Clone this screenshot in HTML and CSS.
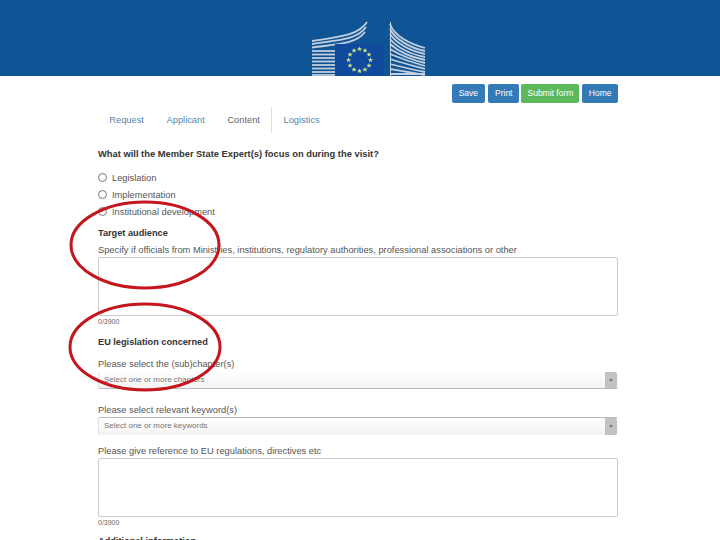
FILE: index.html
```html
<!DOCTYPE html>
<html lang="en">
<head>
    <meta charset="UTF-8">
    <title>Content</title>
    <link rel="stylesheet" href="styles.css">
</head>
<body>

<header class="banner">
    <svg class="logo" width="116" height="58" viewBox="0 0 116 58">
        <g class="wing" fill="none" stroke="#c3cfde" stroke-width="1.800">
            <path d="M2 23 C28 19 48 18 57 4"/>
            <path d="M2 26 C28 22 47 22 56 9"/>
            <path d="M2 29.500 C28 26 46 26 55 14"/>
            <path d="M2 33 H25"/>
            <path d="M2 36.500 H25"/>
            <path d="M2 40 H25"/>
            <path d="M2 43.500 H25"/>
            <path d="M2 47 H25"/>
            <path d="M2 50.500 H25"/>
            <path d="M2 54 H25"/>
            <path d="M2 57 H25"/>
            <path d="M80 6 C84 18 100 26 115 30"/>
            <path d="M80 11 C85 21 100 30 115 33"/>
            <path d="M80 16 C86 25 100 33 115 36"/>
            <path d="M80 21 C87 29 100 36 115 39"/>
            <path d="M80 26 C88 33 100 39 115 42"/>
            <path d="M80 31 C90 37 102 42 115 45"/>
            <path d="M80 36 C92 41 104 45 115 48"/>
            <path d="M80 41 C92 45 104 48 115 51"/>
            <path d="M80 46 C92 49 104 52 115 54"/>
            <path d="M80 51 C92 53 104 55 115 57"/>
            <path d="M80 56 H115"/>
            <path d="M80.500 4 V58" stroke-width="1"/>
        </g>
        <rect x="25" y="26" width="49" height="32" fill="#0f4a9c"/>
        <defs>
            <polygon id="star" points="0,-2.600 .7,-.8 2.500,-.8 1.100,.4 1.600,2.200 0,1.100 -1.600,2.200 -1.100,.4 -2.500,-.8 -.7,-.8" fill="#cfe58a"/>
        </defs>
        <use href="#star" x="49.500" y="31"/>
        <use href="#star" x="55" y="32.500"/>
        <use href="#star" x="59" y="36.500"/>
        <use href="#star" x="60.500" y="42"/>
        <use href="#star" x="59" y="47.500"/>
        <use href="#star" x="55" y="51.500"/>
        <use href="#star" x="49.500" y="53"/>
        <use href="#star" x="44" y="51.500"/>
        <use href="#star" x="40" y="47.500"/>
        <use href="#star" x="38.500" y="42"/>
        <use href="#star" x="40" y="36.500"/>
        <use href="#star" x="44" y="32.500"/>
    </svg>
</header>

<main class="page">
    <div class="actions">
        <a class="btn btn-blue">Save</a>
        <a class="btn btn-blue">Print</a>
        <a class="btn btn-green">Submit form</a>
        <a class="btn btn-blue">Home</a>
    </div>

    <nav class="tabs">
        <a class="tab">Request</a>
        <a class="tab">Applicant</a>
        <a class="tab tab-active">Content</a>
        <a class="tab">Logistics</a>
    </nav>

    <h4 class="question">What will the Member State Expert(s) focus on during the visit?</h4>

    <div class="radios">
        <label class="radio"><input type="radio" name="focus">Legislation</label>
        <label class="radio"><input type="radio" name="focus">Implementation</label>
        <label class="radio"><input type="radio" name="focus">Institutional development</label>
    </div>

    <h4 class="section">Target audience</h4>
    <label class="field-label">Specify if officials from Ministries, institutions, regulatory authorities, professional associations or other</label>
    <textarea class="text-box"></textarea>
    <div class="counter">0/3900</div>

    <h4 class="section section-eu">EU legislation concerned</h4>
    <label class="field-label label-chapters">Please select the (sub)chapter(s)</label>
    <div class="select-box select-chapters">
        <span class="select-text">Select one or more chapters</span>
        <span class="select-arrow"></span>
    </div>

    <label class="field-label label-keywords">Please select relevant keyword(s)</label>
    <div class="select-box select-keywords">
        <span class="select-text">Select one or more keywords</span>
        <span class="select-arrow"></span>
    </div>

    <label class="field-label label-reference">Please give reference to EU regulations, directives etc</label>
    <textarea class="text-box"></textarea>
    <div class="counter">0/3900</div>

    <h4 class="section section-extra">Additional information</h4>
</main>

<svg class="marks" width="720" height="540" viewBox="0 0 720 540">
    <ellipse cx="145" cy="245" rx="74" ry="43" fill="none" stroke="#c4161c" stroke-width="3"/>
    <ellipse cx="145" cy="347" rx="75" ry="43" fill="none" stroke="#c4161c" stroke-width="3"/>
</svg>

</body>
</html>
```

FILE: styles.css
```css
html, body {
    height: 540px;
    overflow: hidden;
}
body {
    margin: 0;
    font-family: "Liberation Sans", Arial, sans-serif;
    font-size: 9.300px;
    color: #555;
    background-color: white;
}
.banner {
    height: 76px;
    background-color: #0f5596;
    display: flex;
    align-items: flex-end;
    padding-left: 310px;
}
.logo {
    display: block;
}
.page {
    width: 520px;
    margin-left: 98px;
}
.actions {
    display: flex;
    justify-content: flex-end;
    gap: 3px;
    padding-top: 8px;
}
.btn {
    height: 19px;
    line-height: 18px;
    padding: 0 7px;
    border-radius: 2px;
    color: white;
    font-size: 8.500px;
}
.btn:last-child {
    padding: 0 6.500px;
}
.btn-blue {
    background-color: #337ab7;
}
.btn-green {
    margin-left: -1px;
    padding: 0 6px;
    background-color: #5cb85c;
}
.tabs {
    display: flex;
    height: 26px;
    margin-top: 4px;
}
.tab {
    line-height: 26px;
    padding: 0 11.300px;
    color: #5585ad;
}
.tab-active {
    color: #666;
    border-right: 1px solid #ddd;
}
.question {
    margin: 15px 0 0;
    font-size: 9.350px;
    line-height: 12px;
    color: #333;
}
.radios {
    margin-top: 9px;
}
.radio {
    display: flex;
    align-items: center;
    height: 17px;
}
.radio input {
    appearance: none;
    width: 9px;
    height: 9px;
    margin: 0 5px 0 0;
    border: 1px solid #777;
    border-radius: 50%;
    box-sizing: border-box;
}
.section {
    margin: 7px 0 0;
    font-size: 9.200px;
    line-height: 12px;
    color: #333;
}
.field-label {
    display: block;
    line-height: 12px;
}
.section + .field-label {
    margin-top: 5px;
}
.text-box {
    display: block;
    width: 100%;
    height: 59px;
    margin: 1px 0 0;
    padding: 0;
    box-sizing: border-box;
    border: 1px solid #ccc;
    border-radius: 2px;
    resize: none;
}
.counter {
    font-size: 7px;
    line-height: 9px;
    margin-top: 1px;
    color: #666;
}
.section-eu {
    margin-top: 10px;
}
.section-eu + .label-chapters {
    margin-top: 10px;
}
.select-box {
    display: flex;
    align-items: center;
    justify-content: space-between;
    padding-left: 5px;
    box-sizing: border-box;
    border-radius: 2px;
    background: linear-gradient(#fff, #f3f3f3);
    font-size: 8px;
    color: #777;
}
.select-text {
    padding-bottom: 2px;
}
.select-chapters {
    height: 17px;
    margin-top: 2px;
    border-bottom: 1px solid #bbb;
    border-left: 1px solid #e2e2e2;
}
.select-keywords {
    height: 18px;
    margin-top: 1px;
    border-top: 1px solid #bbb;
    border-left: 1px solid #e2e2e2;
}
.select-arrow {
    position: relative;
    align-self: stretch;
    width: 12px;
    margin-right: 1px;
    background-color: #c2c2c2;
    border-radius: 0 2px 2px 0;
}
.select-arrow::after {
    content: "";
    position: absolute;
    left: 4px;
    top: 7px;
    border: 2px solid transparent;
    border-top: 3px solid #777;
    border-bottom: 0;
}
.label-keywords {
    margin-top: 15px;
}
.label-reference {
    margin-top: 10px;
}
.section-extra {
    margin-top: 8px;
}
.marks {
    position: absolute;
    left: 0;
    top: 0;
    pointer-events: none;
}
```
